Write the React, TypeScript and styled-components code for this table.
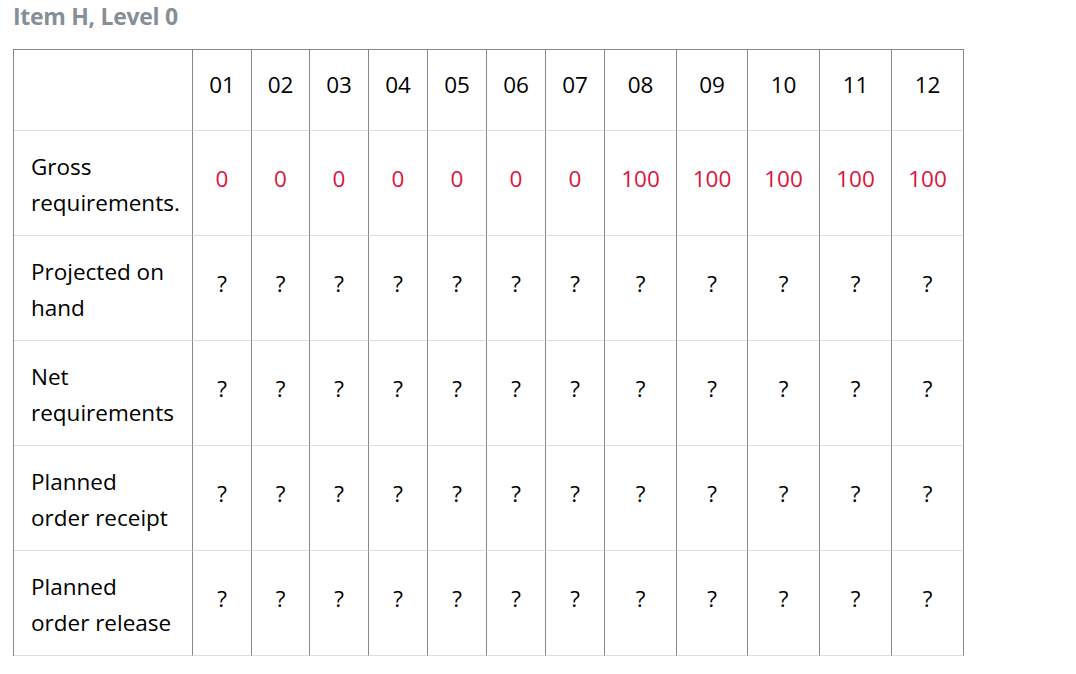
import styled, { createGlobalStyle } from "styled-components";

const GlobalStyle = createGlobalStyle`
  body {
    margin: 0;
    background: #fff;
    font-family: "Open Sans", "Noto Sans", sans-serif;
    color: #000;
  }
`;

const Page = styled.div`
  padding: 3px 13px 0;
`;

const Heading = styled.h3`
  margin: 0 0 19px;
  font-size: 23px;
  line-height: 27px;
  font-weight: 700;
  color: #868e96;
  letter-spacing: -0.3px;
`;

const Table = styled.table`
  border-collapse: separate;
  border-spacing: 0;
  table-layout: fixed;
  width: 950px;
  border-top: 1px solid #888;
  border-left: 1px solid #888;
  font-size: 22.5px;
  line-height: 36px;
`;

const HeadCell = styled.th`
  height: 69px;
  padding: 0 0 11px;
  font-weight: 400;
  text-align: center;
  vertical-align: middle;
  border-right: 1px solid #888;
  border-bottom: 1px solid #dedede;
`;

const LabelCell = styled.td`
  height: 101px;
  padding: 3px 0 0 17px;
  text-align: left;
  vertical-align: middle;
  white-space: nowrap;
  border-right: 1px solid #888;
  border-bottom: 1px solid #dedede;
`;

const ValueCell = styled.td<{ $hot?: boolean }>`
  padding: 0 0 8px;
  text-align: center;
  vertical-align: middle;
  color: ${(p) => (p.$hot ? "crimson" : "#000")};
  border-right: 1px solid #888;
  border-bottom: 1px solid #dedede;
`;

const widths = [178, 58, 57, 58, 58, 58, 58, 58, 71, 70, 71, 71, 71];
const periods = ["01", "02", "03", "04", "05", "06", "07", "08", "09", "10", "11", "12"];

const rows: { label: [string, string]; values: string[] }[] = [
  {
    label: ["Gross", "requirements."],
    values: ["0", "0", "0", "0", "0", "0", "0", "100", "100", "100", "100", "100"],
  },
  { label: ["Projected on", "hand"], values: periods.map(() => "?") },
  { label: ["Net", "requirements"], values: periods.map(() => "?") },
  { label: ["Planned", "order receipt"], values: periods.map(() => "?") },
  { label: ["Planned", "order release"], values: periods.map(() => "?") },
];

export default function App() {
  return (
    <>
      <GlobalStyle />
      <Page>
        <Heading>Item H, Level 0</Heading>
        <Table>
          <colgroup>
            {widths.map((w, i) => (
              <col key={i} style={{ width: w + 1 }} />
            ))}
          </colgroup>
          <thead>
            <tr>
              <HeadCell />
              {periods.map((p) => (
                <HeadCell key={p}>{p}</HeadCell>
              ))}
            </tr>
          </thead>
          <tbody>
            {rows.map((r, ri) => (
              <tr key={ri}>
                <LabelCell>
                  {r.label[0]}
                  <br />
                  {r.label[1]}
                </LabelCell>
                {r.values.map((v, i) => (
                  <ValueCell key={i} $hot={ri === 0}>
                    {v}
                  </ValueCell>
                ))}
              </tr>
            ))}
          </tbody>
        </Table>
      </Page>
    </>
  );
}
